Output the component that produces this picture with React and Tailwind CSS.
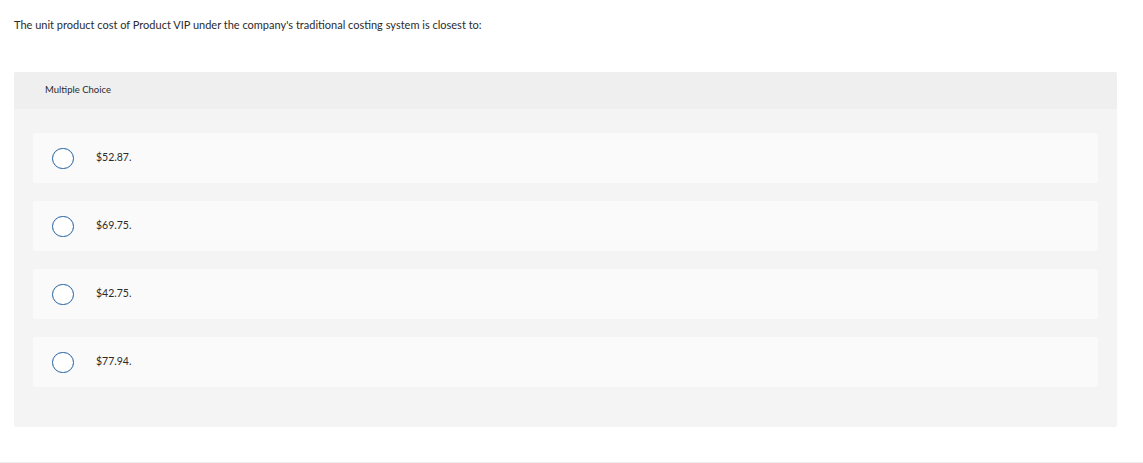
import React from "react";

const options = ["$52.87.", "$69.75.", "$42.75.", "$77.94."];

export default function App() {
  return (
    <div className="w-[1143px] h-[463px] bg-white text-[#333] relative" style={{ fontFamily: "Lato, 'Open Sans', Arial, sans-serif" }}>
      <div className="pl-[14px] pt-[18px] text-[11px] leading-[14px] text-[#2b2b2b]">
        The unit product cost of Product VIP under the company's traditional costing system is closest to:
      </div>
      <div className="mt-[40px] ml-[14px] w-[1103px] h-[355px] bg-[#f4f4f4] rounded-[2px]">
        <div className="h-[37px] bg-[#efefef] flex items-center pl-[31px] text-[9.5px] text-[#2b2b2b] rounded-t-[2px]">
          Multiple Choice
        </div>
        <div className="pt-[24px] px-[19px] flex flex-col gap-[18px]">
          {options.map((o) => (
            <div key={o} className="h-[50px] bg-[#fafafa] rounded-[2px] flex items-center">
              <div className="ml-[19px] w-[22px] h-[21px] rounded-full border-[1.5px] border-[#1f5f9e] bg-white" />
              <div className="ml-[22px] text-[10.5px] text-[#2b2b2b]">{o}</div>
            </div>
          ))}
        </div>
      </div>
      <div className="absolute left-0 right-0 top-[462px] h-[1px] bg-[#ececec]" />
    </div>
  );
}
